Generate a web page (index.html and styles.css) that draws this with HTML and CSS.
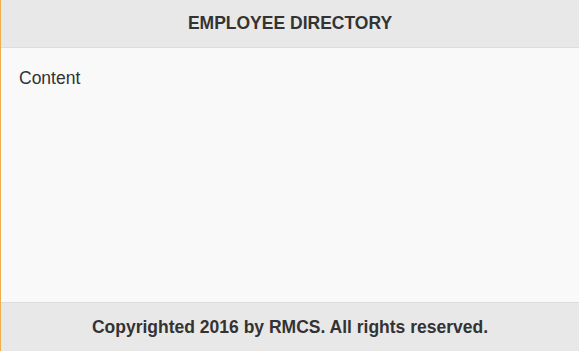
FILE: index.html
```html
<!DOCTYPE html>
<html lang="en">
<head>
    <meta charset="UTF-8">
    <meta name="viewport" content="width=device-width, initial-scale=1.0">
    <title>Employee Directory</title>
    <link rel="stylesheet" href="styles.css">
</head>
<body>
    <div class="page">
        <header class="top-bar">EMPLOYEE DIRECTORY</header>
        <main class="content">Content</main>
        <footer class="bottom-bar">Copyrighted 2016 by RMCS. All rights reserved.</footer>
    </div>
</body>
</html>
```
FILE: styles.css
```css
html, body {
    margin: 0;
    height: 100%;
}
body {
    font-family: "Liberation Sans", Arial, sans-serif;
    font-size: 17.5px;
    color: #333;
    background-color: #f9f9f9;
}
.page {
    display: flex;
    flex-direction: column;
    height: 100%;
    border-left: 1px solid #f0ad4e;
    box-sizing: border-box;
}
.top-bar {
    height: 47px;
    display: flex;
    align-items: center;
    justify-content: center;
    background-color: #e8e8e8;
    border-bottom: 1px solid #dcdcdc;
    font-weight: bold;
}
.content {
    flex: 1;
    padding: 20px 18px;
}
.bottom-bar {
    height: 48px;
    display: flex;
    align-items: center;
    justify-content: center;
    background-color: #e8e8e8;
    border-top: 1px solid #dcdcdc;
    font-weight: bold;
}
```
